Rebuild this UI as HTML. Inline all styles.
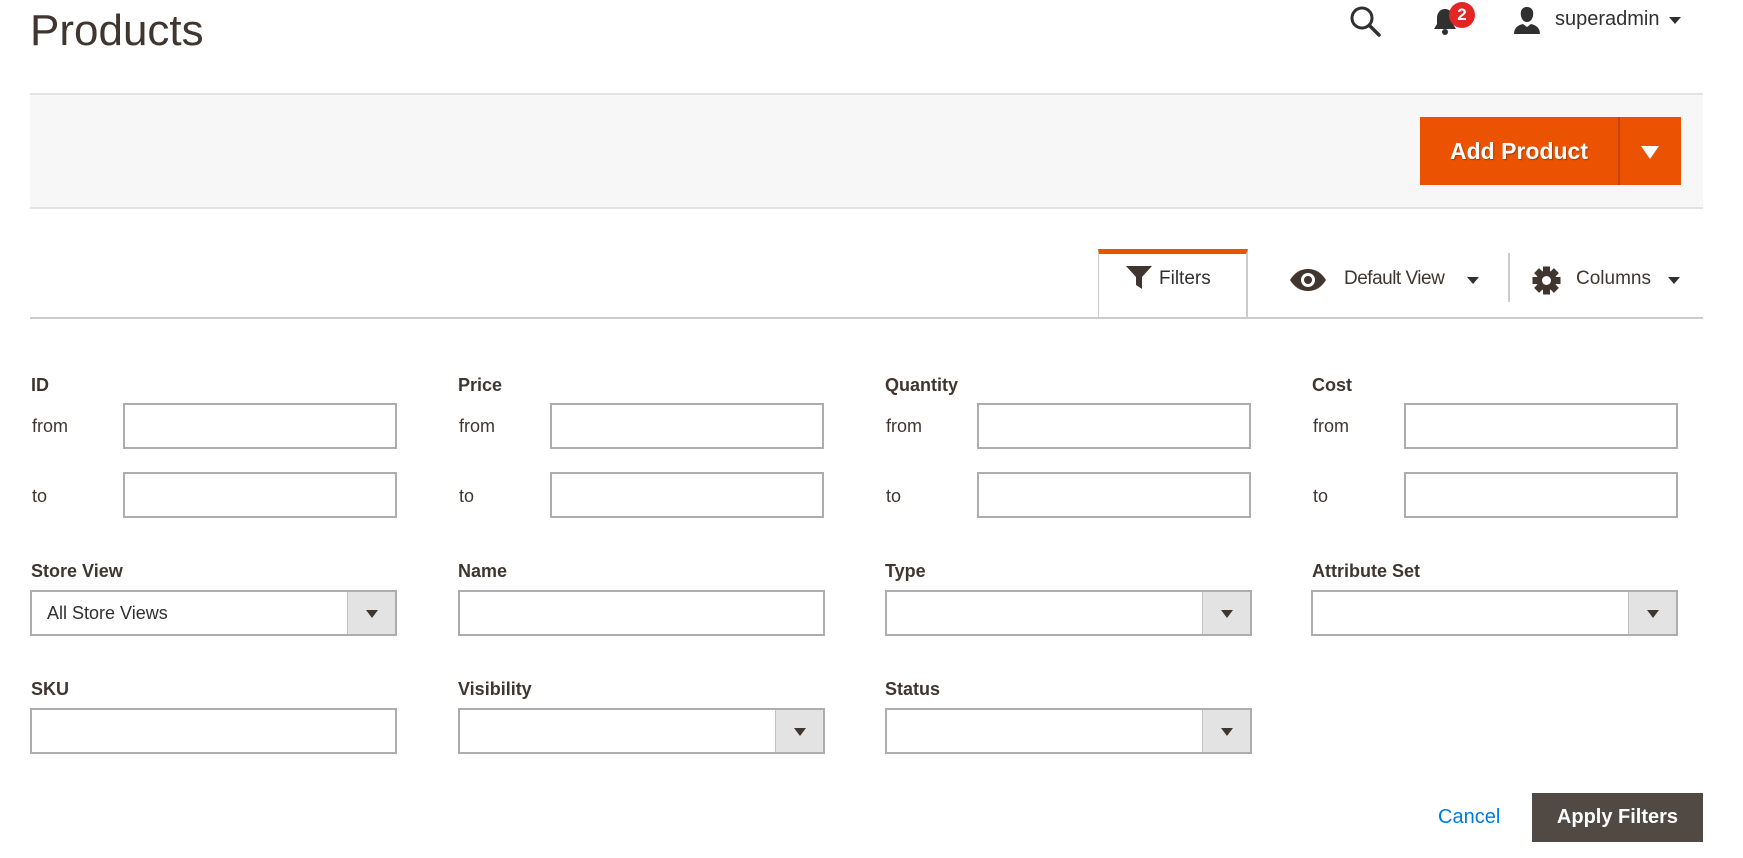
<!DOCTYPE html>
<html><head><meta charset="utf-8"><style>
*{box-sizing:border-box;margin:0;padding:0}
body{width:1743px;height:858px;background:#fff;font-family:"Liberation Sans",sans-serif;color:#41362f;position:relative;overflow:hidden}
.a{position:absolute}
.lbl{position:absolute;font-weight:bold;font-size:18px;color:#41362f;line-height:20px}
.sm{position:absolute;font-size:18px;color:#41362f;line-height:20px}
.in{position:absolute;border:2px solid #adadad;background:#fff;height:46px}
.sel{position:absolute;border:2px solid #adadad;background:#fff;height:46px;width:367px}
.sel .b{position:absolute;right:0;top:0;bottom:0;width:48px;background:#e3e3e3;border-left:1px solid #c2c2c2}
.sel .b:after{content:"";position:absolute;left:18px;top:18px;border-left:6px solid transparent;border-right:6px solid transparent;border-top:8px solid #41362f}
.tri{position:absolute;width:0;height:0;border-left:6px solid transparent;border-right:6px solid transparent;border-top:7px solid #303030}
</style></head><body>
<div class="a" style="left:30px;top:5px;font-size:44px;color:#41362f;line-height:52px">Products</div>

<svg class="a" style="left:1349px;top:5px" width="34" height="34" viewBox="0 0 34 34"><circle cx="13" cy="13" r="10" fill="none" stroke="#303030" stroke-width="3"/><path d="M20.5 20.5 L30 30" stroke="#303030" stroke-width="3.5" stroke-linecap="round"/></svg>
<svg class="a" style="left:1432px;top:7px" width="26" height="28" viewBox="0 0 26 28"><path d="M13 2c-5 0-8 4-8 9v6l-3 5h22l-3-5v-6c0-5-3-9-8-9z" fill="#303030"/><circle cx="13" cy="25" r="3" fill="#303030"/></svg>
<div class="a" style="left:1449px;top:2px;width:26px;height:26px;border-radius:50%;background:#e22626;color:#fff;font-weight:bold;font-size:17px;text-align:center;line-height:26px">2</div>
<svg class="a" style="left:1512px;top:6px" width="30" height="28" viewBox="0 0 30 28"><path d="M15 1c-5 0-7 4-6 9 1 4 3 6 6 6s5-2 6-6c1-5-1-9-6-9zM2 28c0-6 4-9 9-10l4 3 4-3c5 1 9 4 9 10z" fill="#303030"/></svg>
<div class="a" style="left:1555px;top:8px;font-size:20px;color:#303030">superadmin</div>
<div class="tri" style="left:1669px;top:17px"></div>

<div class="a" style="left:30px;top:93px;width:1673px;height:116px;background:#f7f7f7;border-top:2px solid #e3e3e3;border-bottom:2px solid #e3e3e3"></div>
<div class="a" style="left:1420px;top:117px;width:261px;height:68px;background:#eb5202"></div>
<div class="a" style="left:1618px;top:117px;width:2px;height:68px;background:#c94200"></div>
<div class="a" style="left:1420px;top:117px;width:198px;height:68px;color:#fff;font-weight:bold;font-size:23px;line-height:68px;text-align:center;text-shadow:1px 1px 1px rgba(0,0,0,.3)">Add Product</div>
<div class="a" style="left:1641px;top:146px;border-left:9px solid transparent;border-right:9px solid transparent;border-top:13px solid #fff"></div>

<div class="a" style="left:1098px;top:249px;width:150px;height:69px;background:#fff;border-top:5px solid #eb5202;border-left:1px solid #ccc;border-right:2px solid #ccc"></div>
<div class="a" style="left:30px;top:317px;width:1673px;height:2px;background:#cccccc"></div>
<svg class="a" style="left:1126px;top:266px" width="26" height="24" viewBox="0 0 26 24"><path d="M0 0h26l-10 11v12l-6-4v-8z" fill="#41362f"/></svg>
<div class="a" style="left:1159px;top:268px;font-size:19px;color:#303030">Filters</div>

<svg class="a" style="left:1289px;top:268px" width="38" height="24" viewBox="0 0 38 24"><path d="M1 12C6 4 12 1 19 1s13 3 18 11c-5 8-11 11-18 11S6 20 1 12z" fill="#41362f"/><circle cx="19" cy="12" r="7" fill="#fff"/><circle cx="19" cy="12" r="4" fill="#41362f"/></svg>
<div class="a" style="left:1344px;top:268px;font-size:19px;color:#41362f;letter-spacing:-0.5px">Default View</div>
<div class="tri" style="left:1467px;top:277px"></div>
<div class="a" style="left:1508px;top:253px;width:2px;height:49px;background:#ccc"></div>
<svg class="a" style="left:1532px;top:266px" width="29" height="29" viewBox="-14.5 -14.5 29 29"><g fill="#41362f"><circle r="10"/><rect x="-3.5" y="-14" width="7" height="28"/><rect x="-3.5" y="-14" width="7" height="28" transform="rotate(45)"/><rect x="-3.5" y="-14" width="7" height="28" transform="rotate(90)"/><rect x="-3.5" y="-14" width="7" height="28" transform="rotate(135)"/></g><circle r="4.5" fill="#fff"/></svg>
<div class="a" style="left:1576px;top:268px;font-size:19px;color:#41362f">Columns</div>
<div class="tri" style="left:1668px;top:277px"></div>

<div class="lbl" style="left:31px;top:375px">ID</div>
<div class="sm" style="left:32px;top:416px">from</div><div class="in" style="left:123px;top:403px;width:274px"></div>
<div class="sm" style="left:32px;top:486px">to</div><div class="in" style="left:123px;top:472px;width:274px"></div>

<div class="lbl" style="left:458px;top:375px">Price</div>
<div class="sm" style="left:459px;top:416px">from</div><div class="in" style="left:550px;top:403px;width:274px"></div>
<div class="sm" style="left:459px;top:486px">to</div><div class="in" style="left:550px;top:472px;width:274px"></div>

<div class="lbl" style="left:885px;top:375px">Quantity</div>
<div class="sm" style="left:886px;top:416px">from</div><div class="in" style="left:977px;top:403px;width:274px"></div>
<div class="sm" style="left:886px;top:486px">to</div><div class="in" style="left:977px;top:472px;width:274px"></div>

<div class="lbl" style="left:1312px;top:375px">Cost</div>
<div class="sm" style="left:1313px;top:416px">from</div><div class="in" style="left:1404px;top:403px;width:274px"></div>
<div class="sm" style="left:1313px;top:486px">to</div><div class="in" style="left:1404px;top:472px;width:274px"></div>

<div class="lbl" style="left:31px;top:561px">Store View</div>
<div class="sel" style="left:30px;top:590px"><div class="a" style="left:15px;top:11px;font-size:18px;color:#303030">All Store Views</div><div class="b"></div></div>
<div class="lbl" style="left:458px;top:561px">Name</div>
<div class="in" style="left:458px;top:590px;width:367px"></div>
<div class="lbl" style="left:885px;top:561px">Type</div>
<div class="sel" style="left:885px;top:590px"><div class="b"></div></div>
<div class="lbl" style="left:1312px;top:561px">Attribute Set</div>
<div class="sel" style="left:1311px;top:590px"><div class="b"></div></div>

<div class="lbl" style="left:31px;top:679px">SKU</div>
<div class="in" style="left:30px;top:708px;width:367px"></div>
<div class="lbl" style="left:458px;top:679px">Visibility</div>
<div class="sel" style="left:458px;top:708px"><div class="b"></div></div>
<div class="lbl" style="left:885px;top:679px">Status</div>
<div class="sel" style="left:885px;top:708px"><div class="b"></div></div>

<div class="a" style="left:1438px;top:806px;font-size:20px;color:#007bdb">Cancel</div>
<div class="a" style="left:1532px;top:793px;width:171px;height:49px;background:#514943;color:#fff;font-weight:bold;font-size:20px;line-height:49px;text-align:center">Apply Filters</div>
</body></html>
